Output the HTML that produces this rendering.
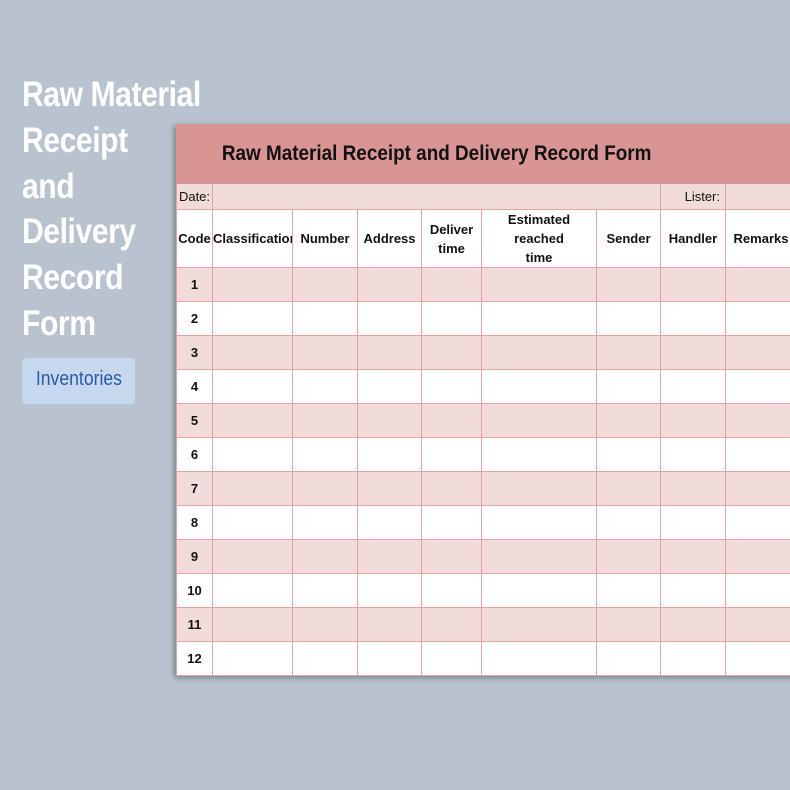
<!DOCTYPE html><html><head><style>
body{margin:0;width:790px;height:790px;background:#b9c3d0;overflow:hidden;position:relative;font-family:"Liberation Sans",sans-serif}
.t{position:absolute;left:22px;top:72px;color:#fff;font-weight:bold;font-size:35px;line-height:45.8px;transform:scaleX(.86);transform-origin:left top;white-space:nowrap;letter-spacing:-.5px}
.b{position:absolute;left:22px;top:358px;width:113px;height:46px;background:#c6d8ee;border-radius:4px;color:#2a5aa6;font-size:20px;line-height:42px;text-align:center;transform-origin:left}
.b span{display:inline-block;transform:scaleX(.88)}
.f{position:absolute;left:176px;top:124px;width:620px;box-shadow:-2px 2px 5px rgba(0,0,0,.35)}
table{border-collapse:collapse;table-layout:fixed;width:620px;font-size:13px;font-weight:bold;color:#111}
td{border:1px solid #e4a3a4;text-align:center;padding:0;overflow:hidden}
.h td{background:#d99594;height:58px;font-size:21px;border-color:#d99594}
.h span{display:inline-block;transform:scaleX(.9)}
.d td{background:#f2dcdb;height:25px;font-weight:normal;font-size:13px}
.hd td{background:#fff;height:55px;line-height:19px}
.r td{height:33px;background:#fff}
.r:nth-child(odd) td{background:#f2dcdb}
.n{font-weight:normal}
</style></head><body>
<div class="t">Raw Material<br>Receipt<br>and<br>Delivery<br>Record<br>Form</div>
<div class="b"><span>Inventories</span></div>
<div class="f"><table>
<colgroup><col style="width:36px"><col style="width:80px"><col style="width:65px"><col style="width:64px"><col style="width:60px"><col style="width:115px"><col style="width:64px"><col style="width:65px"><col style="width:71px"></colgroup>
<tbody>
<tr class="h"><td colspan="9" style="padding-left:0"><span style="margin-left:-100px">Raw Material Receipt and Delivery Record Form</span></td></tr>
<tr class="d"><td>Date:</td><td colspan="6"></td><td style="text-align:right;padding-right:5px">Lister:</td><td></td></tr>
<tr class="hd"><td>Code</td><td>Classification</td><td>Number</td><td>Address</td><td>Deliver<br>time</td><td>Estimated reached<br>time</td><td>Sender</td><td>Handler</td><td>Remarks</td></tr>
</tbody><tbody>
<tr class="r"><td>1</td><td></td><td></td><td></td><td></td><td></td><td></td><td></td><td></td></tr>
<tr class="r"><td>2</td><td></td><td></td><td></td><td></td><td></td><td></td><td></td><td></td></tr>
<tr class="r"><td>3</td><td></td><td></td><td></td><td></td><td></td><td></td><td></td><td></td></tr>
<tr class="r"><td>4</td><td></td><td></td><td></td><td></td><td></td><td></td><td></td><td></td></tr>
<tr class="r"><td>5</td><td></td><td></td><td></td><td></td><td></td><td></td><td></td><td></td></tr>
<tr class="r"><td>6</td><td></td><td></td><td></td><td></td><td></td><td></td><td></td><td></td></tr>
<tr class="r"><td>7</td><td></td><td></td><td></td><td></td><td></td><td></td><td></td><td></td></tr>
<tr class="r"><td>8</td><td></td><td></td><td></td><td></td><td></td><td></td><td></td><td></td></tr>
<tr class="r"><td>9</td><td></td><td></td><td></td><td></td><td></td><td></td><td></td><td></td></tr>
<tr class="r"><td>10</td><td></td><td></td><td></td><td></td><td></td><td></td><td></td><td></td></tr>
<tr class="r"><td>11</td><td></td><td></td><td></td><td></td><td></td><td></td><td></td><td></td></tr>
<tr class="r"><td>12</td><td></td><td></td><td></td><td></td><td></td><td></td><td></td><td></td></tr>
</tbody></table></div>
</body></html>
